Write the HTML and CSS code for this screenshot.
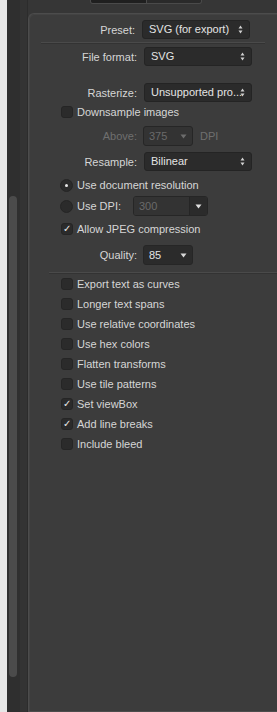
FILE: index.html
```html
<!DOCTYPE html>
<html lang="en">
<head>
    <meta charset="UTF-8">
    <meta name="viewport" content="width=device-width, initial-scale=1.0">
    <title>Export SVG</title>
    <link rel="stylesheet" href="styles.css">
</head>
<body>
    <div class="window">
        <div class="edge"></div>
        <div class="scroll-track">
            <div class="scroll-thumb"></div>
        </div>
        <div class="gutter"></div>
        <div class="content">
            <div class="top-bar">
                <div class="segmented">
                    <span class="seg seg-on"></span>
                    <span class="seg"></span>
                </div>
            </div>
            <div class="panel">
                <div class="row row-preset">
                    <label class="label">Preset:</label>
                    <div class="select">SVG (for export)
                        <svg class="updown" width="5" height="9" viewBox="0 0 5 9"><path d="M2.5 0.5 L4.5 3.5 L0.5 3.5 Z M0.5 5.5 L4.5 5.5 L2.5 8.5 Z" fill="#d0d0d0"/></svg>
                    </div>
                </div>
                <div class="separator sep-top"></div>

                <div class="row row-format">
                    <label class="label">File format:</label>
                    <div class="select">SVG
                        <svg class="updown" width="5" height="9" viewBox="0 0 5 9"><path d="M2.5 0.5 L4.5 3.5 L0.5 3.5 Z M0.5 5.5 L4.5 5.5 L2.5 8.5 Z" fill="#d0d0d0"/></svg>
                    </div>
                </div>

                <div class="row row-rasterize">
                    <label class="label">Rasterize:</label>
                    <div class="select">Unsupported pro...
                        <svg class="updown" width="5" height="9" viewBox="0 0 5 9"><path d="M2.5 0.5 L4.5 3.5 L0.5 3.5 Z M0.5 5.5 L4.5 5.5 L2.5 8.5 Z" fill="#d0d0d0"/></svg>
                    </div>
                </div>

                <div class="check-row row-downsample">
                    <span class="box"></span>
                    <span>Downsample images</span>
                </div>

                <div class="row row-above">
                    <label class="label disabled">Above:</label>
                    <div class="mini-select disabled">375
                        <svg class="down" width="7" height="5" viewBox="0 0 7 5"><path d="M0.5 0.5 L6.5 0.5 L3.5 4.5 Z" fill="#6c6c6c"/></svg>
                    </div>
                    <span class="unit disabled">DPI</span>
                </div>

                <div class="row row-resample">
                    <label class="label">Resample:</label>
                    <div class="select">Bilinear
                        <svg class="updown" width="5" height="9" viewBox="0 0 5 9"><path d="M2.5 0.5 L4.5 3.5 L0.5 3.5 Z M0.5 5.5 L4.5 5.5 L2.5 8.5 Z" fill="#d0d0d0"/></svg>
                    </div>
                </div>

                <div class="check-row row-docres">
                    <span class="radio radio-on"></span>
                    <span>Use document resolution</span>
                </div>

                <div class="check-row row-dpi">
                    <span class="radio"></span>
                    <span class="dpi-label">Use DPI:</span>
                    <div class="combo">
                        <span class="combo-text">300</span>
                        <span class="combo-btn">
                            <svg width="7" height="5" viewBox="0 0 7 5"><path d="M0.5 0.5 L6.5 0.5 L3.5 4.5 Z" fill="#e0e0e0"/></svg>
                        </span>
                    </div>
                </div>

                <div class="check-row row-jpeg">
                    <span class="box box-on">&#10003;</span>
                    <span>Allow JPEG compression</span>
                </div>

                <div class="row row-quality">
                    <label class="label">Quality:</label>
                    <div class="mini-select">85
                        <svg class="down" width="7" height="5" viewBox="0 0 7 5"><path d="M0.5 0.5 L6.5 0.5 L3.5 4.5 Z" fill="#d8d8d8"/></svg>
                    </div>
                </div>
                <div class="separator sep-bottom"></div>

                <div class="options">
                    <div class="check-row option"><span class="box"></span><span>Export text as curves</span></div>
                    <div class="check-row option"><span class="box"></span><span>Longer text spans</span></div>
                    <div class="check-row option"><span class="box"></span><span>Use relative coordinates</span></div>
                    <div class="check-row option"><span class="box"></span><span>Use hex colors</span></div>
                    <div class="check-row option"><span class="box"></span><span>Flatten transforms</span></div>
                    <div class="check-row option"><span class="box"></span><span>Use tile patterns</span></div>
                    <div class="check-row option"><span class="box box-on">&#10003;</span><span>Set viewBox</span></div>
                    <div class="check-row option"><span class="box box-on">&#10003;</span><span>Add line breaks</span></div>
                    <div class="check-row option"><span class="box"></span><span>Include bleed</span></div>
                </div>
            </div>
        </div>
    </div>
</body>
</html>
```

FILE: styles.css
```css
html, body {
    margin: 0;
    padding: 0;
    height: 100%;
    overflow: hidden;
}
body {
    font-family: "Liberation Sans", Arial, sans-serif;
    font-size: 11px;
    color: #d6d6d6;
    background-color: #363636;
}
.window {
    display: flex;
    height: 712px;
}
.edge {
    width: 7px;
    background-color: #e7e7e7;
    flex-shrink: 0;
}
.scroll-track {
    width: 13px;
    flex-shrink: 0;
    background-color: #2f2f2f;
    padding-top: 196px;
    box-sizing: border-box;
}
.scroll-thumb {
    width: 8px;
    margin-left: 2px;
    height: 481px;
    background-color: #4b4b4b;
    border-radius: 4px;
}
.gutter {
    width: 7px;
    flex-shrink: 0;
    background-color: #333333;
    border-right: 1px solid #2c2c2c;
}
.content {
    flex: 1;
    display: flex;
    flex-direction: column;
    background-color: #363636;
}
.top-bar {
    height: 13px;
    flex-shrink: 0;
}
.segmented {
    margin-left: 62px;
    width: 110px;
    height: 3px;
    display: flex;
    border: 1px solid #4a4a4a;
    border-top: none;
    border-radius: 0 0 3px 3px;
    overflow: hidden;
}
.seg {
    flex: 1;
    background-color: #2a2a2a;
}
.seg-on {
    background-color: #1f1f1f;
    border-right: 1px solid #4a4a4a;
}
.panel {
    flex: 1;
    margin-right: -10px;
    background-color: #3c3c3c;
    border: 1px solid #4c4c4c;
    border-right: none;
    border-radius: 6px 0 0 0;
    box-shadow: inset 1px 1px 0 #434343;
}
.row {
    display: flex;
    align-items: center;
    height: 19px;
}
.label {
    width: 108px;
    text-align: right;
    margin-right: 7px;
    flex-shrink: 0;
}
.disabled {
    color: #6f6f6f;
}
.select {
    position: relative;
    width: 108px;
    height: 19px;
    box-sizing: border-box;
    background-color: #2b2b2b;
    border: 1px solid #242424;
    border-radius: 3px;
    padding-left: 6px;
    line-height: 17px;
    color: #e4e4e4;
}
.updown {
    position: absolute;
    right: 6px;
    top: 4px;
}
.row-preset {
    margin-top: 6px;
}
.row-preset .label {
    width: 106px;
    margin-right: 7px;
}
.separator {
    height: 1px;
    background-color: #4a4a4a;
    border-bottom: 1px solid #333333;
}
.sep-top {
    margin: 3px 0 0 12px;
    width: 224px;
}
.row-format {
    margin-top: 3px;
}
.row-rasterize {
    margin-top: 17px;
}
.check-row {
    display: flex;
    align-items: center;
    height: 14px;
    padding-left: 32px;
}
.box {
    width: 12px;
    height: 12px;
    box-sizing: border-box;
    background-color: #2b2b2b;
    border: 1px solid #252525;
    border-radius: 3px;
    margin-right: 4px;
    flex-shrink: 0;
    font-size: 10px;
    line-height: 10px;
    text-align: center;
    color: #e8e8e8;
}
.radio {
    width: 13px;
    height: 13px;
    box-sizing: border-box;
    background-color: #2b2b2b;
    border: 1px solid #252525;
    border-radius: 50%;
    margin-left: -1px;
    margin-right: 4px;
    flex-shrink: 0;
    position: relative;
}
.radio-on::after {
    content: "";
    position: absolute;
    left: 4px;
    top: 4px;
    width: 3px;
    height: 3px;
    border-radius: 50%;
    background-color: #e8e8e8;
}
.row-downsample {
    margin-top: 3px;
}
.row-above {
    margin-top: 7px;
    height: 20px;
}
.row-above .label {
    margin-right: 6px;
}
.mini-select {
    position: relative;
    width: 50px;
    height: 20px;
    box-sizing: border-box;
    background-color: #2b2b2b;
    border: 1px solid #262626;
    border-radius: 3px;
    padding-left: 5px;
    line-height: 18px;
    color: #e4e4e4;
}
.mini-select.disabled {
    background-color: #333333;
    color: #6a6a6a;
}
.down {
    position: absolute;
    right: 5px;
    top: 7px;
}
.unit {
    margin-left: 7px;
}
.row-resample {
    margin-top: 6px;
}
.row-docres {
    margin-top: 7px;
}
.row-dpi {
    margin-top: 4px;
    height: 20px;
}
.dpi-label {
    width: 56px;
    color: #d6d6d6;
}
.combo {
    display: flex;
    width: 75px;
    height: 20px;
    box-sizing: border-box;
    border: 1px solid #262626;
    border-radius: 3px;
    overflow: hidden;
}
.combo-text {
    flex: 1;
    background-color: #333333;
    color: #6a6a6a;
    padding-left: 5px;
    line-height: 18px;
}
.combo-btn {
    width: 17px;
    background-color: #2b2b2b;
    border-left: 1px solid #252525;
    display: flex;
    align-items: center;
    justify-content: center;
}
.row-jpeg {
    margin-top: 6px;
}
.row-quality {
    margin-top: 9px;
    height: 20px;
}
.row-quality .label {
    margin-right: 6px;
}
.sep-bottom {
    margin: 7px 0 0 20px;
    width: 240px;
}
.option {
    height: 20px;
}
```
